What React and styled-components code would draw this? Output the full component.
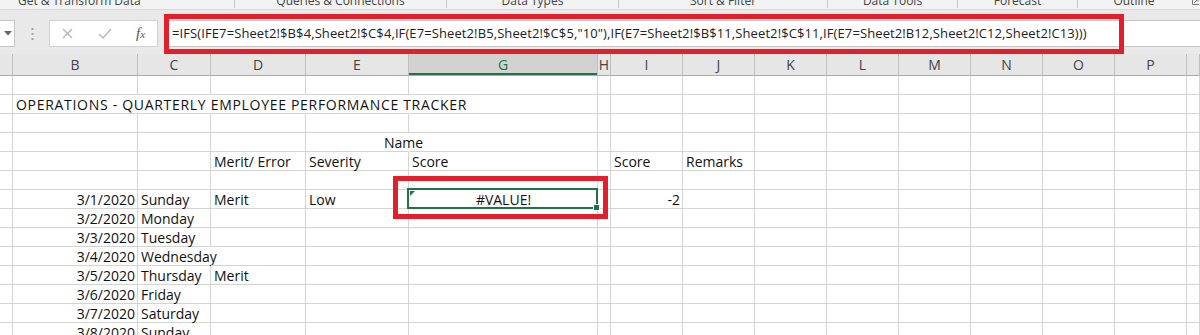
import React from "react";
import styled, { createGlobalStyle } from "styled-components";

const GlobalStyle = createGlobalStyle`
  html, body {
    margin: 0;
    padding: 0;
    background: #ffffff;
    overflow: hidden;
  }
  body {
    font-family: "Open Sans", "Liberation Sans", sans-serif;
  }
`;

const COLS = [13, 125, 73, 95, 103, 189, 13, 72, 72, 72, 72, 72, 72, 72, 72];
const TEMPLATE = `${COLS.map((w) => w + "px").join(" ")} 1fr`;
const LETTERS = ["", "B", "C", "D", "E", "G", "H", "I", "J", "K", "L", "M", "N", "O", "P", ""];

const FORMULA =
  '=IFS(IFE7=Sheet2!$B$4,Sheet2!$C$4,IF(E7=Sheet2!B5,Sheet2!$C$5,"10"),IF(E7=Sheet2!$B$11,Sheet2!$C$11,IF(E7=Sheet2!B12,Sheet2!C12,Sheet2!C13)))';

const GROUPS = [
  { label: "Get & Transform Data", width: 235, left: true },
  { label: "Queries & Connections", width: 212 },
  { label: "Data Types", width: 172 },
  { label: "Sort & Filter", width: 209 },
  { label: "Data Tools", width: 130 },
  { label: "Forecast", width: 120 },
  { label: "Outline", width: 112, last: true },
];

const days = ["Sunday", "Monday", "Tuesday", "Wednesday", "Thursday", "Friday", "Saturday", "Sunday"];

// each row: cells by column index, plus which right gridlines are hidden by overflow text
const ROWS = [
  { cells: {} },
  {
    cells: { 1: { text: "OPERATIONS - QUARTERLY EMPLOYEE PERFORMANCE TRACKER", spacing: 0.7 } },
    hide: [1, 2, 3, 4],
  },
  { cells: {} },
  { cells: { 4: { text: "Name", indent: 78 } }, hide: [4] },
  {
    cells: {
      3: { text: "Merit/ Error" },
      4: { text: "Severity" },
      5: { text: "Score" },
      7: { text: "Score" },
      8: { text: "Remarks" },
    },
  },
  { cells: {} },
  ...days.map((day, i) => {
    const cells = {
      1: { text: `3/${i + 1}/2020`, align: "right" },
      2: { text: day },
    };
    if (i === 0) {
      cells[3] = { text: "Merit" };
      cells[4] = { text: "Low" };
      cells[5] = { text: "#VALUE!", align: "center", selected: true };
      cells[7] = { text: "-2", align: "right" };
    }
    if (i === 4) cells[3] = { text: "Merit" };
    return { cells, hide: i === 3 ? [2] : [] };
  }),
];

function App() {
  return (
    <Page>
      <GlobalStyle />
      <RibbonStrip>
        {GROUPS.map((g) => (
          <Group key={g.label} $width={g.width} $left={g.left} $last={g.last}>
            <GroupLabel>{g.label}</GroupLabel>
          </Group>
        ))}
        <Launcher>
          <svg width="7" height="7" viewBox="0 0 7 7">
            <path d="M0.5 0 V6.5 H7" fill="none" stroke="#777" strokeWidth="1" />
            <path d="M2 5 L6 1 M3.5 1 H6 V3.5" fill="none" stroke="#777" strokeWidth="1" />
          </svg>
        </Launcher>
      </RibbonStrip>

      <FormulaArea>
        <NameBox>
          <svg width="8" height="5" viewBox="0 0 8 5">
            <polygon points="0,0 8,0 4,4.5" fill="#666" />
          </svg>
        </NameBox>
        <Grip>
          <svg width="3" height="12" viewBox="0 0 3 12">
            <rect x="0.5" y="0" width="2" height="2" fill="#a6a6a6" />
            <rect x="0.5" y="5" width="2" height="2" fill="#a6a6a6" />
            <rect x="0.5" y="10" width="2" height="2" fill="#a6a6a6" />
          </svg>
        </Grip>
        <ButtonBox>
          <IconButton>
            <svg width="11" height="11" viewBox="0 0 11 11">
              <path d="M1 1 L10 10 M10 1 L1 10" stroke="#b7b7b7" strokeWidth="1.4" fill="none" />
            </svg>
          </IconButton>
          <IconButton>
            <svg width="14" height="11" viewBox="0 0 14 11">
              <path d="M1 6 L5 10 L13 1" stroke="#b7b7b7" strokeWidth="1.4" fill="none" />
            </svg>
          </IconButton>
          <FxLabel>
            f<small>x</small>
          </FxLabel>
        </ButtonBox>
        <FormulaInput>{FORMULA}</FormulaInput>
        <Annotation $top={4} $left={164} $width={960} $height={40} />
      </FormulaArea>

      <HeaderRow>
        {LETTERS.map((l, i) => (
          <HeaderCell key={i} $selected={l === "G"}>
            {l}
          </HeaderCell>
        ))}
      </HeaderRow>

      <Sheet>
        {ROWS.map((row, r) => (
          <Row key={r}>
            {LETTERS.map((_, c) => {
              const cell = row.cells[c];
              const hidden = row.hide && row.hide.includes(c);
              return (
                <Cell
                  key={c}
                  $align={cell && cell.align}
                  $indent={cell && cell.indent}
                  $spacing={cell && cell.spacing}
                  $noRight={hidden}
                  $selected={cell && cell.selected}
                >
                  {cell && cell.selected && <ErrorMark />}
                  {cell && cell.text}
                  {cell && cell.selected && <FillHandle />}
                </Cell>
              );
            })}
          </Row>
        ))}
        <Annotation $top={100} $left={393} $width={215} $height={43} />
      </Sheet>
    </Page>
  );
}

export default App;

const Page = styled.div`
  width: 1200px;
  height: 335px;
  overflow: hidden;
  background: #ffffff;
`;

const RibbonStrip = styled.div`
  height: 10px;
  box-sizing: border-box;
  display: flex;
  background: #f3f3f3;
  border-bottom: 1px solid #d8d8d8;
  overflow: hidden;
`;

const Group = styled.div`
  width: ${(p) => p.$width}px;
  flex: none;
  box-sizing: border-box;
  display: flex;
  justify-content: ${(p) => (p.$left ? "flex-start" : "center")};
  padding-left: ${(p) => (p.$left ? "18px" : "0")};
  border-right: ${(p) => (p.$last ? "none" : "1px solid #c8c8c8")};
  height: 8px;
`;

const GroupLabel = styled.span`
  font-size: 12px;
  line-height: 12px;
  margin-top: -5px;
  color: #444444;
  white-space: nowrap;
`;

const Launcher = styled.div`
  flex: 1;
  display: flex;
  justify-content: center;
  margin-top: -2px;
`;

const FormulaArea = styled.div`
  position: relative;
  height: 44px;
  box-sizing: border-box;
  padding-top: 10px;
  display: flex;
  align-items: flex-start;
  background: #e9e9e9;
`;

const NameBox = styled.div`
  width: 15px;
  height: 27px;
  box-sizing: border-box;
  background: #ffffff;
  border: 1px solid #c6c6c6;
  border-left: none;
  display: flex;
  align-items: center;
  justify-content: flex-start;
  padding-left: 4px;
`;

const Grip = styled.div`
  width: 34px;
  height: 27px;
  display: flex;
  align-items: center;
  justify-content: center;
`;

const ButtonBox = styled.div`
  width: 109px;
  height: 27px;
  box-sizing: border-box;
  background: #ffffff;
  border: 1px solid #d0d0d0;
  display: flex;
  align-items: center;
  padding-left: 12px;
`;

const IconButton = styled.div`
  width: 36px;
  display: flex;
  align-items: center;
  justify-content: flex-start;
`;

const FxLabel = styled.span`
  font-family: "Liberation Serif", "DejaVu Serif", serif;
  font-style: italic;
  font-size: 15px;
  color: #555555;
  margin-left: 2px;

  small {
    font-size: 11px;
  }
`;

const FormulaInput = styled.div`
  flex: 1;
  height: 27px;
  margin-left: 6px;
  box-sizing: border-box;
  background: #ffffff;
  border: 1px solid #c6c6c6;
  border-right: none;
  padding-left: 7px;
  font-size: 13px;
  letter-spacing: 0.1px;
  line-height: 25px;
  color: #222222;
  white-space: nowrap;
  overflow: hidden;
`;

const Annotation = styled.div`
  position: absolute;
  top: ${(p) => p.$top}px;
  left: ${(p) => p.$left}px;
  width: ${(p) => p.$width}px;
  height: ${(p) => p.$height}px;
  box-sizing: border-box;
  border: 5px solid #e2202b;
  pointer-events: none;
  z-index: 5;
`;

const HeaderRow = styled.div`
  display: grid;
  grid-template-columns: ${TEMPLATE};
  height: 22px;
`;

const HeaderCell = styled.div`
  box-sizing: border-box;
  height: 22px;
  background: ${(p) => (p.$selected ? "#d2d2d2" : "#e6e6e6")};
  color: ${(p) => (p.$selected ? "#217346" : "#444444")};
  border-right: 1px solid #c0c0c0;
  border-bottom: 1px solid #ababab;
  box-shadow: ${(p) => (p.$selected ? "inset 0 -2px 0 #217346" : "none")};
  font-size: 14px;
  line-height: 21px;
  text-align: center;
  white-space: nowrap;
  overflow: visible;
`;

const Sheet = styled.div`
  position: relative;
`;

const Row = styled.div`
  display: grid;
  grid-template-columns: ${TEMPLATE};
  height: 19px;
`;

const Cell = styled.div`
  position: relative;
  box-sizing: border-box;
  height: 19px;
  border-right: 1px solid ${(p) => (p.$noRight ? "transparent" : "#d4d4d4")};
  border-bottom: 1px solid #d4d4d4;
  padding: 1px 2px 0 ${(p) => (p.$indent ? p.$indent : 3)}px;
  font-size: 14px;
  letter-spacing: ${(p) => (p.$spacing ? p.$spacing : 0)}px;
  line-height: 18px;
  color: #111111;
  white-space: nowrap;
  overflow: visible;
  text-align: ${(p) => p.$align || "left"};

  ${(p) =>
    p.$selected &&
    `
    z-index: 2;
    &::after {
      content: "";
      position: absolute;
      top: -2px;
      left: -2px;
      right: -1px;
      bottom: -1px;
      border: 2px solid #217346;
      pointer-events: none;
    }
  `}
`;

const ErrorMark = styled.span`
  position: absolute;
  top: 1px;
  left: 1px;
  width: 0;
  height: 0;
  border-top: 5px solid #217346;
  border-right: 5px solid transparent;
`;

const FillHandle = styled.span`
  position: absolute;
  right: -3px;
  bottom: -3px;
  width: 5px;
  height: 5px;
  background: #217346;
  border: 1px solid #ffffff;
  z-index: 3;
`;
